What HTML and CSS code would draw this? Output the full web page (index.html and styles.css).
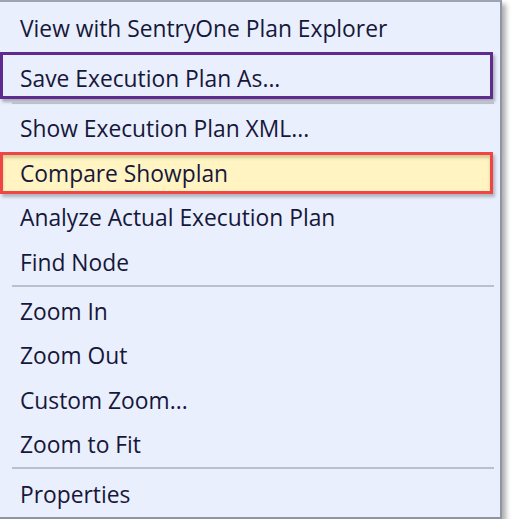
FILE: index.html
```html
<!DOCTYPE html>
<html>
<head>
<meta charset="utf-8">
<link rel="stylesheet" href="styles.css">
</head>
<body>
<div class="menu">
  <div class="item">View with SentryOne Plan Explorer</div>
  <div class="item box-purple">Save Execution Plan As...</div>
  <div class="sep sep-a"></div>
  <div class="item">Show Execution Plan XML...</div>
  <div class="item box-red">Compare Showplan</div>
  <div class="item">Analyze Actual Execution Plan</div>
  <div class="item">Find Node</div>
  <div class="sep sep-b"></div>
  <div class="item">Zoom In</div>
  <div class="item">Zoom Out</div>
  <div class="item">Custom Zoom...</div>
  <div class="item">Zoom to Fit</div>
  <div class="sep sep-c"></div>
  <div class="item">Properties</div>
</div>
</body>
</html>
```
FILE: styles.css
```css
html, body {
  margin: 0;
  padding: 0;
  background: #ffffff;
}
.menu {
  width: 500px;
  box-sizing: content-box;
  background: #e9effd;
  border-top: 2px solid #9ba5b6;
  border-right: 2px solid #8e96a4;
  border-bottom: 2px solid #8e96a4;
  padding-top: 4.25px;
  box-shadow: 4px 4px 5px rgba(0, 0, 0, 0.32);
  font-family: "Open Sans", "Noto Sans", sans-serif;
  font-size: 22.8px;
  color: #17173a;
}
.item {
  height: 44.5px;
  box-sizing: border-box;
  display: flex;
  align-items: center;
  padding-left: 20px;
  white-space: nowrap;
}
.box-purple {
  margin-top: 1.25px;
  height: 47px;
  width: 493px;
  border: 3px solid #5f2b8f;
  padding-left: 17px;
  padding-top: 6px;
  box-shadow: 2px 3px 3px rgba(0, 0, 0, 0.28);
}
.box-red {
  margin-top: 1.25px;
  margin-bottom: 1.25px;
  height: 42px;
  width: 493px;
  border: 3px solid #f04545;
  padding-left: 17px;
  background: #fff4c2;
  box-shadow: 2px 3px 3px rgba(0, 0, 0, 0.25), inset 0 3px 3px rgba(120, 110, 60, 0.3);
}
.sep {
  box-sizing: border-box;
  margin-left: 12px;
  margin-right: 6px;
  border-top: 2px solid #bcc0cc;
}
.sep-a {
  margin-top: 3px;
  height: 4.25px;
}
.sep-b {
  margin-top: 0.75px;
  height: 3.75px;
}
.sep-c {
  margin-top: 0.25px;
  height: 5.25px;
}
```
